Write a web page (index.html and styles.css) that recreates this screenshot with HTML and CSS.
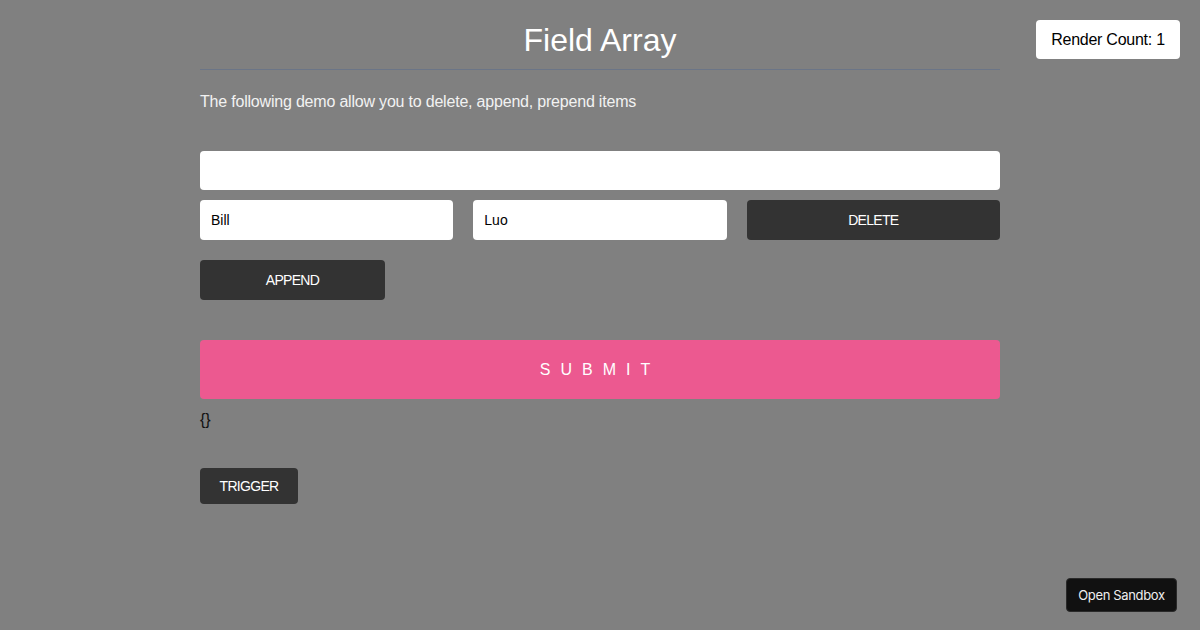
FILE: index.html
```html
<!DOCTYPE html>
<html>
<head>
<meta charset="utf-8">
<link rel="stylesheet" href="styles.css">
</head>
<body>
<div class="render-count">Render Count: 1</div>
<main class="container">
  <header class="header">
    <h1 class="title">Field Array</h1>
  </header>
  <p class="intro">The following demo allow you to delete, append, prepend items</p>
  <form class="form">
    <input class="input input-full" type="text" value="">
    <div class="row">
      <input class="input" type="text" value="Bill">
      <input class="input" type="text" value="Luo">
      <button type="button" class="btn btn-dark">DELETE</button>
    </div>
    <button type="button" class="btn btn-dark btn-append">APPEND</button>
    <button type="button" class="btn btn-submit">SUBMIT</button>
  </form>
  <div class="output">{}</div>
  <button type="button" class="btn btn-dark btn-trigger">TRIGGER</button>
</main>
<button type="button" class="sandbox">Open Sandbox</button>
</body>
</html>
```
FILE: styles.css
```css
html, body {
  margin: 0;
  padding: 0;
}
body {
  background: #808080;
  font-family: "Liberation Sans", Arial, sans-serif;
  color: #fff;
  width: 1200px;
  height: 630px;
  overflow: hidden;
  position: relative;
}
.container {
  width: 800px;
  margin: 0 auto;
  padding-top: 22px;
}
.header {
  border-bottom: 1px solid #6b7587;
  padding-bottom: 10px;
}
.title {
  margin: 0;
  font-size: 32px;
  line-height: 37px;
  font-weight: 400;
  text-align: center;
  color: #fff;
}
.intro {
  margin: 23px 0 0;
  font-size: 16px;
  line-height: 18px;
  letter-spacing: -0.2px;
  color: #f2f2f2;
}
.form {
  margin-top: 40px;
  display: flex;
  flex-direction: column;
  align-items: flex-start;
}
.input {
  box-sizing: border-box;
  border: none;
  border-radius: 4px;
  background: #fff;
  height: 40px;
  padding: 0 11px;
  font-family: "Liberation Sans", Arial, sans-serif;
  font-size: 14px;
  color: #000;
  outline: none;
  width: 100%;
}
.input-full {
  height: 39px;
}
.row {
  margin-top: 10px;
  width: 100%;
  display: grid;
  grid-template-columns: 1fr 1fr 1fr;
  column-gap: 20px;
}
.btn {
  box-sizing: border-box;
  border: none;
  border-radius: 4px;
  font-family: "Liberation Sans", Arial, sans-serif;
  color: #fff;
  cursor: pointer;
  padding: 0;
}
.btn-dark {
  background: #333;
  height: 40px;
  font-size: 14px;
  letter-spacing: -0.7px;
}
.btn-append {
  margin-top: 20px;
  width: 185px;
}
.btn-submit {
  margin-top: 40px;
  width: 100%;
  height: 59px;
  background: #ec5990;
  font-size: 16px;
  letter-spacing: 10px;
}
.output {
  margin-top: 11px;
  font-size: 16px;
  line-height: 20px;
  color: #111;
}
.btn-trigger {
  margin-top: 38px;
  width: 98px;
  height: 36px;
}
.render-count {
  position: absolute;
  top: 20px;
  right: 20px;
  width: 144px;
  height: 39px;
  box-sizing: border-box;
  background: #fff;
  color: #000;
  border-radius: 4px;
  font-size: 16px;
  letter-spacing: -0.25px;
  display: flex;
  align-items: center;
  justify-content: center;
}
.sandbox {
  position: absolute;
  left: 1066px;
  top: 578px;
  width: 111px;
  height: 34px;
  box-sizing: border-box;
  background: #111;
  color: #eee;
  border: 1px solid #2a2a2a;
  border-radius: 4px;
  font-family: "Inter", "Liberation Sans", sans-serif;
  font-size: 13px;
  letter-spacing: -0.35px;
  padding: 0;
}
```
